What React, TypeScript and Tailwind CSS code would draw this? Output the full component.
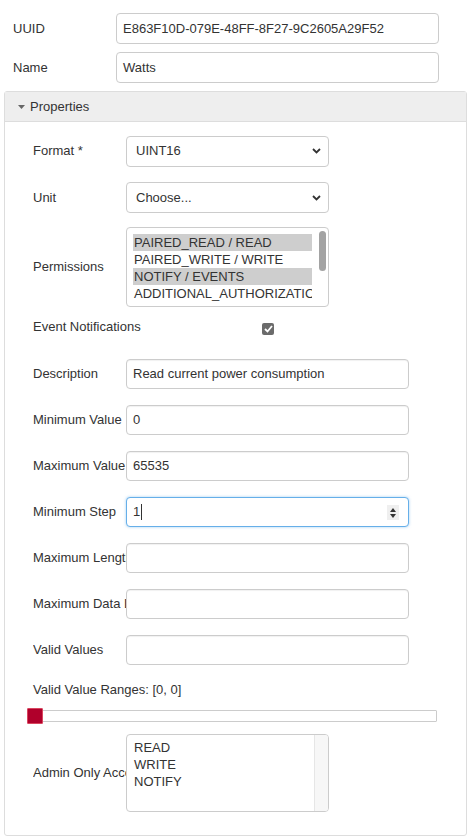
import React from 'react';

// Shared font stack (Helvetica-like)
const font = "font-['Liberation_Sans',Arial,sans-serif]";

function TextField({ value }: { value?: string }) {
  return (
    <div className="h-[30px] w-[283px] border border-[#cccccc] rounded-[4px] bg-white flex items-center px-[6px] text-[13px] text-[#333333] shadow-[inset_0_1px_1px_rgba(0,0,0,0.06)]">
      {value}
    </div>
  );
}

function SelectField({ value }: { value: string }) {
  return (
    <div className="h-[31px] w-[203px] border border-[#cccccc] rounded-[4px] bg-white flex items-center justify-between pl-[9px] pr-[6px] text-[13px] text-[#333333]">
      <span>{value}</span>
      <svg width="9" height="6" viewBox="0 0 9 6" className="mr-[1px]">
        <polyline points="1,1 4.5,4.5 8,1" fill="none" stroke="#333333" strokeWidth="1.8" />
      </svg>
    </div>
  );
}

function Row({
  label,
  children,
  className = '',
}: {
  label: string;
  children: React.ReactNode;
  className?: string;
}) {
  return (
    <div className={`flex items-center ${className}`}>
      <div className="w-[93px] shrink-0 overflow-hidden whitespace-nowrap text-[13px] text-[#333333]">
        {label}
      </div>
      {children}
    </div>
  );
}

export default function App() {
  const permissions = [
    { label: 'PAIRED_READ / READ', selected: true },
    { label: 'PAIRED_WRITE / WRITE', selected: false },
    { label: 'NOTIFY / EVENTS', selected: true },
    { label: 'ADDITIONAL_AUTHORIZATION', selected: false },
    { label: 'TIMED_WRITE', selected: false },
  ];

  return (
    <div className={`${font} bg-white w-[474px] h-[840px] pt-[13px] pl-[4px] text-[13px] text-[#333333]`}>
      {/* top fields */}
      <div className="pl-[9px] flex items-center h-[31px]">
        <div className="w-[103px]">UUID</div>
        <div className="h-[31px] w-[323px] border border-[#cccccc] rounded-[4px] flex items-center px-[6px]">
          E863F10D-079E-48FF-8F27-9C2605A29F52
        </div>
      </div>
      <div className="pl-[9px] flex items-center h-[31px] mt-[8px]">
        <div className="w-[103px]">Name</div>
        <div className="h-[31px] w-[323px] border border-[#cccccc] rounded-[4px] flex items-center px-[6px]">
          Watts
        </div>
      </div>

      {/* properties panel */}
      <div className="mt-[8px] w-[463px] h-[745px] border border-[#dddddd] rounded-[3px]">
        <div className="h-[30px] bg-[#eeeeee] border-b border-[#dddddd] flex items-center pl-[13px]">
          <svg width="7" height="4" viewBox="0 0 7 4" className="mr-[5px]">
            <polygon points="0,0 7,0 3.5,4" fill="#666666" />
          </svg>
          <span>Properties</span>
        </div>

        <div className="pl-[28px] pt-[14px]">
          <Row label="Format *" className="h-[30px]">
            <SelectField value="UINT16" />
          </Row>
          <Row label="Unit" className="h-[31px] mt-[16px]">
            <SelectField value="Choose..." />
          </Row>

          <Row label="Permissions" className="h-[80px] mt-[14px]">
            <div className="relative h-[80px] w-[203px] border border-[#cccccc] rounded-[4px] bg-white overflow-hidden">
              <div className="absolute left-[6px] top-[6px] w-[179px] overflow-hidden">
                {permissions.map((p) => (
                  <div
                    key={p.label}
                    className={`h-[17px] leading-[17px] whitespace-nowrap pl-[1px] ${p.selected ? 'bg-[#cecece]' : ''}`}
                  >
                    {p.label}
                  </div>
                ))}
              </div>
              <div className="absolute right-[2px] top-[3px] w-[7px] h-[40px] rounded-full bg-[#a3a3a3]" />
            </div>
          </Row>

          <div className="flex items-center h-[20px] mt-[10px]">
            <div className="w-[229px] shrink-0 whitespace-nowrap">Event Notifications</div>
            <div className="w-[12px] h-[12px] rounded-[2px] bg-[#6b6b6b] flex items-center justify-center mt-[3px]">
              <svg width="9" height="8" viewBox="0 0 9 8">
                <polyline points="1,4 3.5,6.5 8,1" fill="none" stroke="#ffffff" strokeWidth="1.8" />
              </svg>
            </div>
          </div>

          <Row label="Description" className="h-[30px] mt-[22px]">
            <TextField value="Read current power consumption" />
          </Row>
          <Row label="Minimum Value" className="h-[30px] mt-[16px]">
            <TextField value="0" />
          </Row>
          <Row label="Maximum Value" className="h-[30px] mt-[16px]">
            <TextField value="65535" />
          </Row>
          <Row label="Minimum Step" className="h-[30px] mt-[16px]">
            <div className="relative h-[30px] w-[283px] border border-[#66afe9] rounded-[4px] bg-white flex items-center px-[6px] shadow-[0_0_3px_rgba(102,175,233,0.6)]">
              <span>1</span>
              <span className="w-[1px] h-[16px] bg-[#333333] ml-[1px]" />
              <div className="absolute right-[9px] top-[7px] w-[12px] h-[15px] bg-[#efefef] flex flex-col items-center justify-center gap-[2px]">
                <svg width="6" height="4" viewBox="0 0 6 4">
                  <polygon points="0,4 6,4 3,0" fill="#333333" />
                </svg>
                <svg width="6" height="4" viewBox="0 0 6 4">
                  <polygon points="0,0 6,0 3,4" fill="#333333" />
                </svg>
              </div>
            </div>
          </Row>
          <Row label="Maximum Length" className="h-[30px] mt-[16px]">
            <TextField />
          </Row>
          <Row label="Maximum Data Length" className="h-[30px] mt-[16px]">
            <TextField />
          </Row>
          <Row label="Valid Values" className="h-[30px] mt-[16px]">
            <TextField />
          </Row>

          <div className="mt-[15px] h-[20px] leading-[20px]">Valid Value Ranges: [0, 0]</div>

          {/* range slider */}
          <div className="-ml-[6px] mt-[8px] w-[410px] h-[16px] relative flex items-center">
            <div className="w-full h-[12px] border border-[#cccccc] bg-white rounded-[1px]" />
            <div className="absolute left-0 top-0 w-[16px] h-[16px] bg-[#b0002b] border border-[#d9465f] rounded-[1px]" />
          </div>

          <Row label="Admin Only Access" className="h-[78px] mt-[10px]">
            <div className="h-[78px] w-[203px] border border-[#cccccc] rounded-[4px] bg-white flex overflow-hidden">
              <div className="flex-1 pt-[4px] pl-[7px]">
                <div className="h-[17px] leading-[17px]">READ</div>
                <div className="h-[17px] leading-[17px]">WRITE</div>
                <div className="h-[17px] leading-[17px]">NOTIFY</div>
              </div>
              <div className="w-[14px] bg-[#f7f7f7] border-l border-[#e6e6e6]" />
            </div>
          </Row>
        </div>
      </div>
    </div>
  );
}
